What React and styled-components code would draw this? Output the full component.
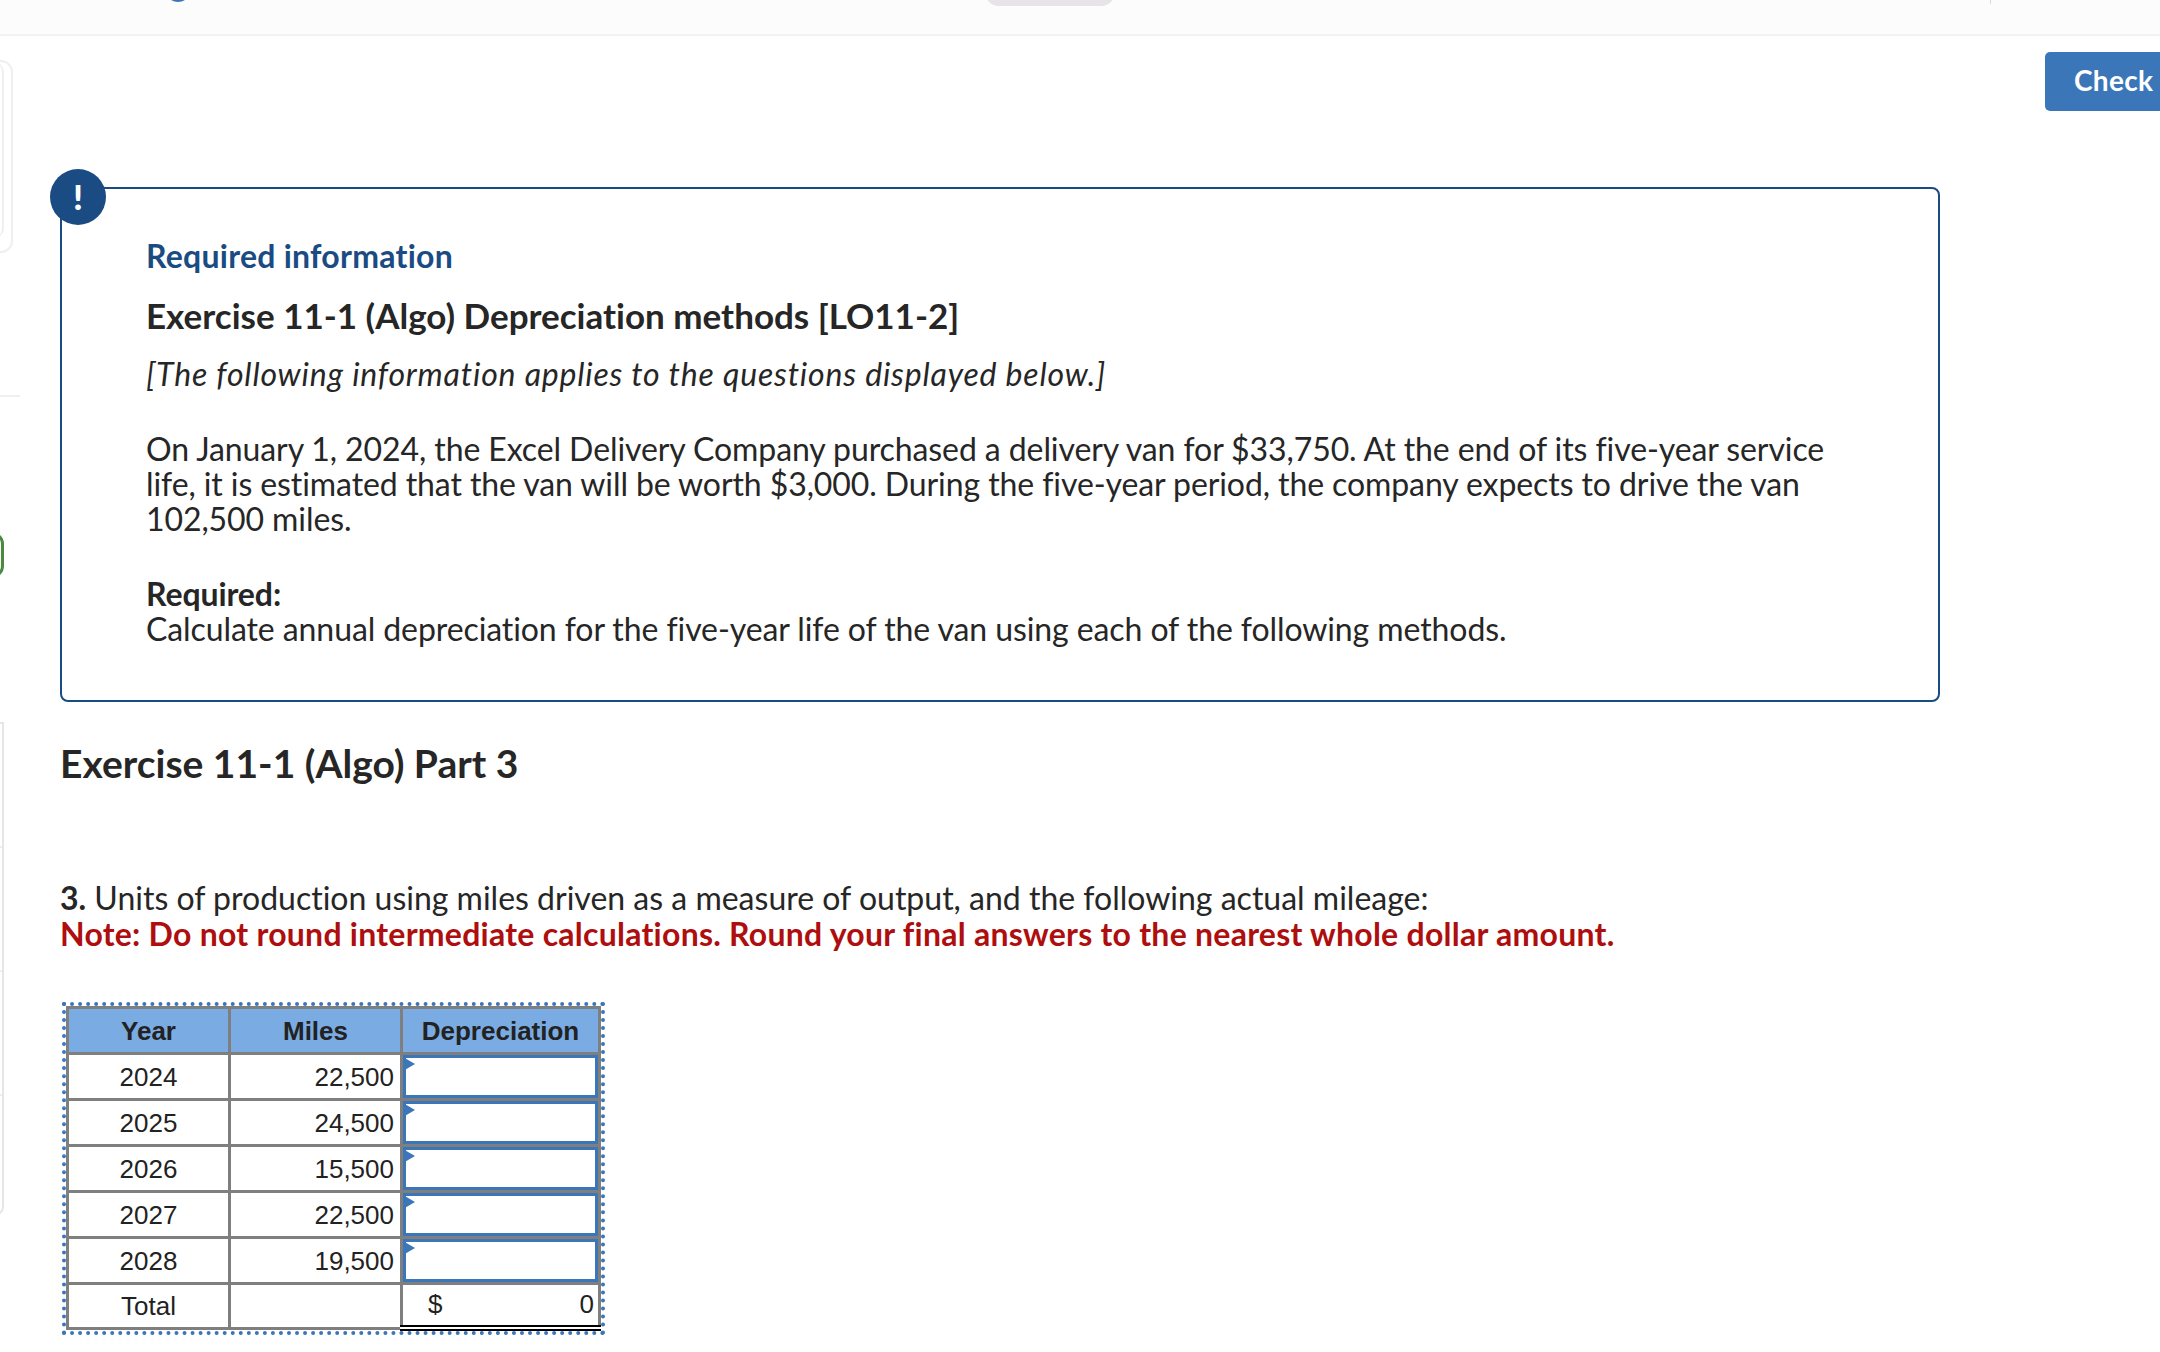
import React from 'react';
import styled, { createGlobalStyle } from 'styled-components';

const Global = createGlobalStyle`
  html, body {
    margin: 0;
    padding: 0;
    background: #fff;
    overflow: hidden;
  }
  body {
    width: 2160px;
    height: 1352px;
    font-family: "Lato", "Liberation Sans", sans-serif;
    font-variant-ligatures: none;
    color: #262626;
  }
`;

const TopBar = styled.div`
  position: relative;
  height: 34px;
  background: #fcfcfc;
  border-bottom: 2px solid #f2f2f2;
  overflow: hidden;
`;

const ProgressDot = styled.div`
  position: absolute;
  left: 165px;
  top: -24px;
  width: 26px;
  height: 26px;
  border-radius: 50%;
  background: #3b76b8;
`;

const Pill = styled.div`
  position: absolute;
  left: 985px;
  top: -30px;
  width: 130px;
  height: 36px;
  border-radius: 14px;
  background: #e6e4e6;
`;

const Tick = styled.div`
  position: absolute;
  left: 1990px;
  top: 0;
  width: 1px;
  height: 4px;
  background: #d8d8d8;
`;

const Page = styled.div`
  display: flex;
  align-items: flex-start;
  padding-top: 16px;
`;

const Rail = styled.div`
  display: flex;
  flex-direction: column;
  flex-shrink: 0;
  width: 20px;
  margin-right: 40px;
`;

const RailCard = styled.div`
  box-sizing: border-box;
  width: 33px;
  height: 193px;
  margin: 8px 0 0 -20px;
  border: 2px solid #efefef;
  border-radius: 12px;
`;

const RailCardInner = styled.div`
  box-sizing: border-box;
  width: 22px;
  height: 176px;
  border-right: 2px solid #efefef;
  border-radius: 0 10px 10px 0;
`;

const RailRule = styled.div`
  width: 20px;
  height: 2px;
  margin-top: 142px;
  background: #efefef;
`;

const RailStatus = styled.div`
  box-sizing: border-box;
  width: 24px;
  height: 46px;
  margin: 135px 0 0 -20px;
  border: 3px solid #4a8a3f;
  border-radius: 14px;
`;

const RailPanel = styled.div`
  box-sizing: border-box;
  width: 24px;
  height: 493px;
  margin: 144px 0 0 -20px;
  border: 2px solid #e6e6e6;
  border-radius: 0 0 8px 0;
`;

const RailSection = styled.div`
  height: 122px;
  border-bottom: 2px solid #eeeeee;
`;

const Content = styled.div`
  width: 1880px;
  flex-shrink: 0;
  padding-top: 135px;
`;

const CheckButton = styled.button`
  flex-shrink: 0;
  margin-left: 105px;
  width: 130px;
  height: 59px;
  padding: 0 0 4px 29px;
  text-align: left;
  border: 0;
  border-radius: 5px;
  background: #3b76b8;
  color: #fff;
  font: 700 28px "Lato", sans-serif;
  letter-spacing: 0.3px;
`;

const Card = styled.div`
  position: relative;
  box-sizing: border-box;
  height: 515px;
  padding: 48px 83px 0 84px;
  border: 2px solid #1a4b82;
  border-radius: 8px;
`;

const Badge = styled.div`
  position: absolute;
  left: -12px;
  top: -20px;
  width: 56px;
  height: 56px;
  border-radius: 50%;
  background: #1a4b82;
  color: #fff;
  font: 900 35px/54px "Lato", sans-serif;
  text-align: center;
`;

const Label = styled.div`
  font-size: 32px;
  line-height: 38px;
  font-weight: 700;
  letter-spacing: 0.25px;
  color: #1a4b82;
`;

const Title = styled.div`
  margin-top: 19px;
  font-size: 35px;
  line-height: 42px;
  font-weight: 700;
`;

const Lead = styled.div`
  margin-top: 20px;
  font-size: 32px;
  line-height: 35px;
  font-style: italic;
  letter-spacing: 0.82px;
  white-space: nowrap;
`;

const Para = styled.div`
  margin-top: ${p => p.$gap}px;
  font-size: 32px;
  line-height: 35px;
  letter-spacing: -0.09px;
  white-space: nowrap;
`;

const Strong = styled.b`
  font-weight: 700;
`;

const PartTitle = styled.h2`
  margin: 39px 0 0;
  font-size: 39px;
  line-height: 44px;
  font-weight: 700;
`;

const Question = styled.div`
  margin-top: 95px;
  font-size: 32px;
  line-height: 36px;
  white-space: nowrap;
`;

const Note = styled.div`
  font-weight: 700;
  letter-spacing: 0.25px;
  color: #ae0e0e;
`;

const TableFrame = styled.div`
  display: inline-block;
  margin: 50px 0 0 2px;
  border: 4px dotted #3b76b8;
`;

const Grid = styled.table`
  border-collapse: collapse;
  table-layout: fixed;
  width: 532px;
  font: 26px "Liberation Sans", Arial, sans-serif;
  color: #222;
`;

const HeadCell = styled.th`
  height: 41px;
  padding: 2px 0 0;
  border: 3px solid #7f7f7f;
  background: #7aace3;
  font-weight: 700;
  text-align: center;
`;

const Cell = styled.td`
  height: 41px;
  padding: 2px ${p => (p.$align === 'right' ? '6px' : '0')} 0 0;
  border: 3px solid #7f7f7f;
  text-align: ${p => p.$align || 'center'};
`;

const InputCell = styled.td`
  position: relative;
  height: 43px;
  padding: 0;
  border: 3px solid #7f7f7f;
`;

const InputBox = styled.div`
  box-sizing: border-box;
  height: 43px;
  border: 3px solid #3b76b8;
`;

const Flag = styled.span`
  position: absolute;
  left: 0;
  top: 2px;
  border-left: 12px solid #3b76b8;
  border-top: 7.5px solid transparent;
  border-bottom: 7.5px solid transparent;
`;

const TotalLabelCell = styled(Cell)`
  height: 37px;
`;

const TotalCell = styled.td`
  height: 38px;
  padding: 0 4px 2px 25px;
  border: 3px solid #7f7f7f;
  border-bottom: 6px double #000;
`;

const TotalRow = styled.div`
  display: flex;
  justify-content: space-between;
`;

const rows = [
  ['2024', '22,500'],
  ['2025', '24,500'],
  ['2026', '15,500'],
  ['2027', '22,500'],
  ['2028', '19,500'],
];

export default function App() {
  return (
    <>
      <Global />
      <TopBar>
        <ProgressDot />
        <Pill />
        <Tick />
      </TopBar>
      <Page>
        <Rail>
          <RailCard>
            <RailCardInner />
          </RailCard>
          <RailRule />
          <RailStatus />
          <RailPanel>
            <RailSection />
            <RailSection />
            <RailSection />
          </RailPanel>
        </Rail>
        <Content>
          <Card>
            <Badge>!</Badge>
            <Label>Required information</Label>
            <Title>Exercise 11-1 (Algo) Depreciation methods [LO11-2]</Title>
            <Lead>[The following information applies to the questions displayed below.]</Lead>
            <Para $gap={40}>
              On January 1, 2024, the Excel Delivery Company purchased a delivery van for $33,750. At the end of its five-year service
              <br />
              life, it is estimated that the van will be worth $3,000. During the five-year period, the company expects to drive the van
              <br />
              102,500 miles.
            </Para>
            <Para $gap={40}>
              <Strong>Required:</Strong>
              <br />
              Calculate annual depreciation for the five-year life of the van using each of the following methods.
            </Para>
          </Card>
          <PartTitle>Exercise 11-1 (Algo) Part 3</PartTitle>
          <Question>
            <Strong>3.</Strong> Units of production using miles driven as a measure of output, and the following actual mileage:
            <Note>Note: Do not round intermediate calculations. Round your final answers to the nearest whole dollar amount.</Note>
          </Question>
          <TableFrame>
            <Grid>
              <colgroup>
                <col width="162" />
                <col width="172" />
                <col width="198" />
              </colgroup>
              <thead>
                <tr>
                  <HeadCell>Year</HeadCell>
                  <HeadCell>Miles</HeadCell>
                  <HeadCell>Depreciation</HeadCell>
                </tr>
              </thead>
              <tbody>
                {rows.map(([year, miles]) => (
                  <tr key={year}>
                    <Cell>{year}</Cell>
                    <Cell $align="right">{miles}</Cell>
                    <InputCell>
                      <InputBox />
                      <Flag />
                    </InputCell>
                  </tr>
                ))}
                <tr>
                  <TotalLabelCell>Total</TotalLabelCell>
                  <TotalLabelCell />
                  <TotalCell>
                    <TotalRow>
                      <span>$</span>
                      <span>0</span>
                    </TotalRow>
                  </TotalCell>
                </tr>
              </tbody>
            </Grid>
          </TableFrame>
        </Content>
        <CheckButton>Check</CheckButton>
      </Page>
    </>
  );
}
